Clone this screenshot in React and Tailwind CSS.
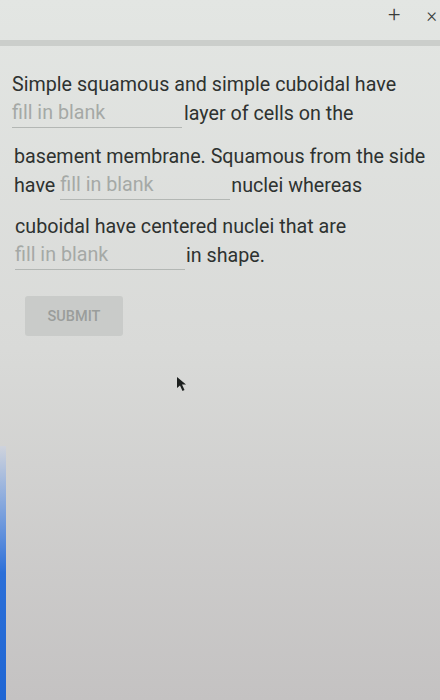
import React from 'react';

function Blank() {
  return (
    <span className="inline-block h-[29px] w-[170px] border-b border-[#b3b7b4] leading-[28px] text-[#a5a9a6]">
      fill in blank
    </span>
  );
}

export default function App() {
  return (
    <div
      className="relative flex h-[700px] w-[440px] flex-col overflow-hidden bg-gradient-to-b from-[#e3e6e3] via-[#d9dad8] to-[#c4c2c2] text-[#2e3230]"
      style={{ fontFamily: 'Roboto, "Liberation Sans", sans-serif' }}
    >
      {/* Header */}
      <div className="flex h-[40px] items-start justify-end gap-[26px] pr-[3px] pt-[3px] text-[#3a3d3b]">
        <span className="text-[22px] font-light leading-[24px]">+</span>
        <span className="text-[20px] font-light leading-[24px]">×</span>
      </div>
      <div className="h-[6px] bg-[#cbcecb]" />

      <div className="flex flex-1">
        {/* window edge on the left */}
        <div className="flex w-[6px] shrink-0 flex-col">
          <div className="h-[400px]" />
          <div className="flex-1 bg-gradient-to-b from-[#cfd3dc] via-[#2b6fd8] to-[#1f66d4]" />
        </div>

        {/* Questions */}
        <div className="flex flex-1 flex-col pl-[6px] pt-[24px] text-[19.7px] leading-[29px]">
          <div className="flex flex-col">
            <span>Simple squamous and simple cuboidal have</span>
            <div className="flex items-start">
              <Blank />
              <span className="ml-[2px]">layer of cells on the</span>
            </div>
          </div>

          <div className="mt-[14px] flex flex-col pl-[2px]">
            <span>basement membrane. Squamous from the side</span>
            <div className="flex items-start">
              <span className="mr-[5px]">have</span>
              <Blank />
              <span className="ml-[1px]">nuclei whereas</span>
            </div>
          </div>

          <div className="mt-[12px] flex flex-col pl-[3px]">
            <span>cuboidal have centered nuclei that are</span>
            <div className="flex items-start">
              <Blank />
              <span className="ml-[1px]">in shape.</span>
            </div>
          </div>

          <div className="mt-[26px] pl-[13px]">
            <button className="flex h-[40px] w-[98px] items-center justify-center rounded-[3px] bg-[#c9cbc9] text-[14.5px] font-medium text-[#9a9d9b]">
              SUBMIT
            </button>
          </div>
        </div>
      </div>

      {/* mouse pointer */}
      <svg className="absolute left-[176px] top-[376px]" width="12" height="16" viewBox="0 0 12 16">
        <path d="M1 1 L1 12 L4 9.5 L6.5 15 L8.5 14 L6 8.5 L10 8.5 Z" fill="#1d201f" />
      </svg>
    </div>
  );
}
